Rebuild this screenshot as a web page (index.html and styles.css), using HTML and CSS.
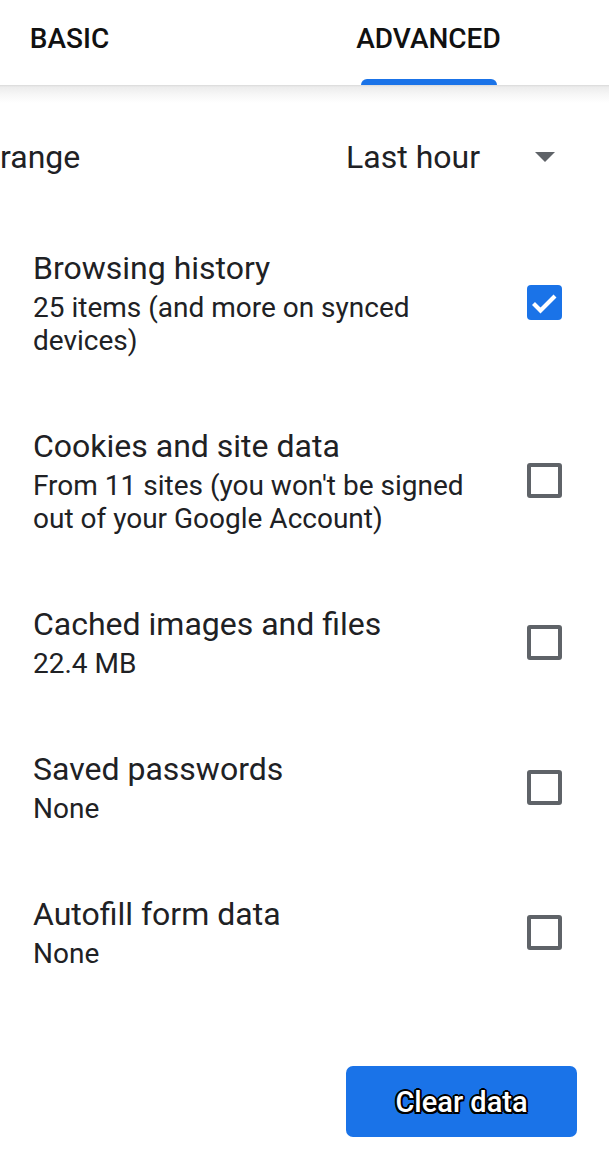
FILE: index.html
```
<!DOCTYPE html>
<html lang="en">
<head>
<meta charset="utf-8">
<title>Clear browsing data</title>
<link rel="stylesheet" href="styles.css">
</head>
<body>
<header class="tabs">
  <div class="tab-row">
    <div class="tab"><span class="tab-label">BASIC</span></div>
    <div class="tab tab-active"><span class="tab-label">ADVANCED</span><span class="indicator"></span></div>
  </div>
</header>
<div class="tabs-shadow"></div>

<div class="range-row">
  <span class="range-label">range</span>
  <span class="range-value">Last hour</span>
  <span class="caret"></span>
</div>

<ul class="options">
  <li class="option">
    <div class="option-text">
      <div class="option-title">Browsing history</div>
      <div class="option-sub">25 items (and more on synced devices)</div>
    </div>
    <span class="checkbox checkbox-checked">
      <svg viewBox="0 0 35 35" width="35" height="35"><polyline points="6.5,18.5 13.5,25.5 28,11" fill="none" stroke="#fff" stroke-width="4.2"/></svg>
    </span>
  </li>
  <li class="option">
    <div class="option-text">
      <div class="option-title">Cookies and site data</div>
      <div class="option-sub">From 11 sites (you won't be signed out of your Google Account)</div>
    </div>
    <span class="checkbox"></span>
  </li>
  <li class="option">
    <div class="option-text">
      <div class="option-title">Cached images and files</div>
      <div class="option-sub">22.4 MB</div>
    </div>
    <span class="checkbox"></span>
  </li>
  <li class="option">
    <div class="option-text">
      <div class="option-title">Saved passwords</div>
      <div class="option-sub">None</div>
    </div>
    <span class="checkbox"></span>
  </li>
  <li class="option">
    <div class="option-text">
      <div class="option-title">Autofill form data</div>
      <div class="option-sub">None</div>
    </div>
    <span class="checkbox"></span>
  </li>
</ul>

<div class="actions">
  <button class="clear-btn" type="button">Clear data</button>
</div>
</body>
</html>
```
FILE: styles.css
```
html, body {
  margin: 0;
  padding: 0;
  background: #fff;
}

body {
  font-family: Roboto, "Noto Sans", "Liberation Sans", sans-serif;
  color: #202124;
  overflow: hidden;
}

.tabs {
  height: 85px;
  overflow: hidden;
  background: #fff;
}

.tab-row {
  display: flex;
  width: 718px;
  height: 85px;
  margin-left: -110px;
}

.tab {
  flex: 1;
  display: flex;
  flex-direction: column;
  align-items: center;
}

.tab-label {
  height: 79px;
  line-height: 78px;
  font-size: 28px;
  font-weight: 500;
  color: #111;
}

.indicator {
  width: 136px;
  height: 6px;
  background: #1a73e8;
  border-radius: 6px 6px 0 0;
}

.tabs-shadow {
  height: 18px;
  background: linear-gradient(#d9d9d9, #ececec 2px, #f6f6f6 9px, #fff 18px);
}

.range-row {
  display: flex;
  align-items: center;
  height: 40px;
  margin-top: 34px;
  padding-right: 54px;
  font-size: 32px;
  line-height: 40px;
}

.range-label {
  flex: 1;
}

.caret {
  width: 0;
  height: 0;
  margin-left: 55px;
  border-left: 10px solid transparent;
  border-right: 10px solid transparent;
  border-top: 10px solid #5f6368;
}

.options {
  list-style: none;
  margin: 71px 0 0;
  padding: 0 47px 0 33px;
  display: flex;
  flex-direction: column;
  gap: 69px;
}

.option {
  display: flex;
  align-items: center;
  gap: 40px;
}

.option-text {
  flex: 1;
}

.option-title {
  font-size: 32px;
  line-height: 40px;
}

.option-sub {
  margin-top: 3px;
  font-size: 28px;
  line-height: 33px;
}

.checkbox {
  flex: none;
  width: 35px;
  height: 35px;
  box-sizing: border-box;
  border: 4px solid #5f6368;
  border-radius: 3px;
}

.checkbox-checked {
  border: 0;
  border-radius: 4px;
  background: #1a73e8;
}

.checkbox-checked svg {
  display: block;
}

.actions {
  display: flex;
  justify-content: flex-end;
  margin-top: 96px;
  padding-right: 32px;
}

.clear-btn {
  width: 231px;
  height: 71px;
  padding: 0;
  border: 0;
  border-radius: 7px;
  background: #1a73e8;
  color: #fff;
  font-family: Roboto, "Noto Sans", sans-serif;
  font-size: 29px;
  font-weight: 500;
  text-shadow: -2px 0 #000, 2px 0 #000, 0 -2px #000, 0 2px #000,
    -1.5px -1.5px #000, 1.5px -1.5px #000, -1.5px 1.5px #000, 1.5px 1.5px #000;
}
```
